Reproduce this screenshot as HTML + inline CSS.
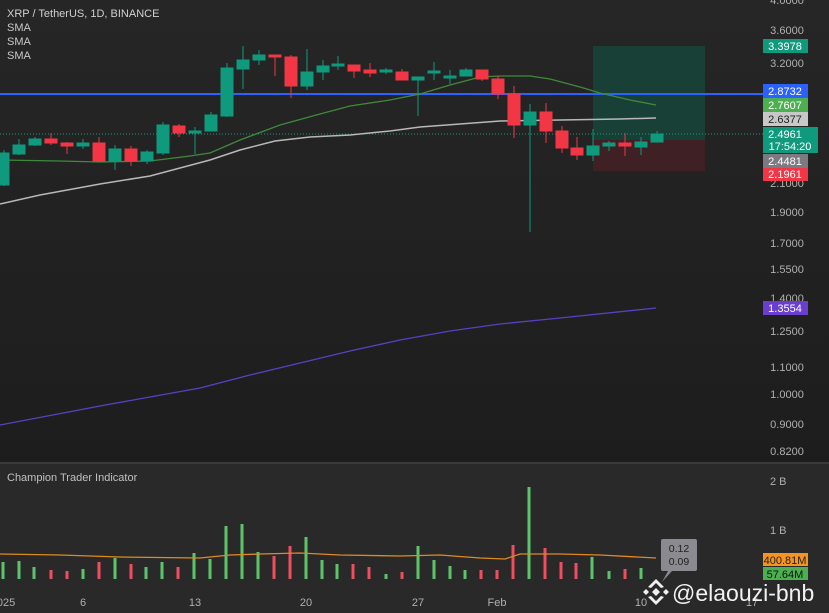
<!DOCTYPE html>
<html><head><meta charset="utf-8"><style>
html,body{margin:0;padding:0;background:#202020;width:829px;height:613px;overflow:hidden}
svg{display:block}
text{font-family:"Liberation Sans",sans-serif}
</style></head><body>
<svg width="829" height="613" xmlns="http://www.w3.org/2000/svg">
<defs><linearGradient id="bg" x1="0" y1="0" x2="0" y2="1"><stop offset="0" stop-color="#262626"/><stop offset="1" stop-color="#1d1d1d"/></linearGradient></defs>
<rect x="0" y="0" width="829" height="462" fill="url(#bg)"/>
<rect x="0" y="462" width="829" height="2" fill="#3a3a3a"/>
<rect x="0" y="464" width="829" height="149" fill="#292929"/>
<rect x="593" y="46" width="112" height="94" fill="#0d5c4a" fill-opacity="0.5"/>
<rect x="593" y="140" width="112" height="31" fill="#4a2227" fill-opacity="0.75"/>
<line x1="0" y1="134" x2="763" y2="134" stroke="#149a7c" stroke-width="1" stroke-dasharray="1,2"/>
<rect x="0" y="93" width="763" height="2" fill="#2962ff"/>
<polyline fill="none" stroke="#3f8a3a" stroke-width="1.3" points="0,160 60,161 100,162 150,161 190,156 210,153 240,140 280,125 320,114 350,106 390,100 420,94 450,85 480,77 500,76 530,76 550,79 580,87 600,93 630,100 656,105"/>
<polyline fill="none" stroke="#b8b8b8" stroke-width="1.5" points="0,204 40,195 100,184 150,176 210,160 240,150 275,141 310,137 350,135 390,131 420,127 460,124 500,121 560,120 620,119 656,118"/>
<polyline fill="none" stroke="#5b3fc4" stroke-width="1.3" points="0,425 100,406 200,388 250,375 300,363 350,351 400,340 450,331 500,324 560,318 656,308"/>
<g stroke-width="1">
<g fill="#0f9a7e" stroke="#0f9a7e">
<line x1="4" y1="150" x2="4" y2="186"/><rect x="0" y="153" width="9" height="32"/>
<line x1="19" y1="139" x2="19" y2="155"/><rect x="13" y="145" width="12" height="9"/>
<line x1="35" y1="137" x2="35" y2="146"/><rect x="29" y="139" width="12" height="6"/>
<line x1="83" y1="139" x2="83" y2="149"/><rect x="77" y="143" width="12" height="3"/>
<line x1="115" y1="145" x2="115" y2="170"/><rect x="109" y="149" width="12" height="12"/>
<line x1="147" y1="150" x2="147" y2="164"/><rect x="141" y="152" width="12" height="9"/>
<line x1="163" y1="122" x2="163" y2="155"/><rect x="157" y="125" width="12" height="28"/>
<line x1="195" y1="127" x2="195" y2="154"/><rect x="189" y="131" width="12" height="2"/>
<line x1="211" y1="112" x2="211" y2="131"/><rect x="205" y="115" width="12" height="16"/>
<line x1="227" y1="63" x2="227" y2="117"/><rect x="221" y="68" width="12" height="48"/>
<line x1="243" y1="46" x2="243" y2="89"/><rect x="237" y="60" width="12" height="9"/>
<line x1="259" y1="50" x2="259" y2="65"/><rect x="253" y="55" width="12" height="5"/>
<line x1="307" y1="49" x2="307" y2="90"/><rect x="301" y="72" width="12" height="14"/>
<line x1="323" y1="60" x2="323" y2="80"/><rect x="317" y="66" width="12" height="6"/>
<line x1="338" y1="56" x2="338" y2="70"/><rect x="332" y="64" width="12" height="2"/>
<line x1="386" y1="68" x2="386" y2="74"/><rect x="380" y="70" width="12" height="2"/>
<line x1="418" y1="77" x2="418" y2="116"/><rect x="412" y="77" width="12" height="3"/>
<line x1="434" y1="62" x2="434" y2="80"/><rect x="428" y="71" width="12" height="2"/>
<line x1="450" y1="70" x2="450" y2="84"/><rect x="444" y="76" width="12" height="2"/>
<line x1="466" y1="68" x2="466" y2="76"/><rect x="460" y="70" width="12" height="6"/>
<line x1="530" y1="104" x2="530" y2="232"/><rect x="524" y="112" width="12" height="13"/>
<line x1="593" y1="129" x2="593" y2="161"/><rect x="587" y="146" width="12" height="9"/>
<line x1="609" y1="141" x2="609" y2="151"/><rect x="603" y="143" width="12" height="3"/>
<line x1="641" y1="137" x2="641" y2="155"/><rect x="635" y="142" width="12" height="5"/>
<line x1="657" y1="131" x2="657" y2="135"/><rect x="651" y="134" width="12" height="8"/>
</g>
<g fill="#f23645" stroke="#f23645">
<line x1="51" y1="133" x2="51" y2="145"/><rect x="45" y="139" width="12" height="4"/>
<line x1="67" y1="142" x2="67" y2="154"/><rect x="61" y="143" width="12" height="3"/>
<line x1="99" y1="137" x2="99" y2="162"/><rect x="93" y="143" width="12" height="18"/>
<line x1="131" y1="146" x2="131" y2="166"/><rect x="125" y="149" width="12" height="12"/>
<line x1="179" y1="124" x2="179" y2="137"/><rect x="173" y="126" width="12" height="7"/>
<line x1="275" y1="55" x2="275" y2="76"/><rect x="269" y="55" width="12" height="2"/>
<line x1="291" y1="55" x2="291" y2="98"/><rect x="285" y="57" width="12" height="29"/>
<line x1="354" y1="65" x2="354" y2="78"/><rect x="348" y="65" width="12" height="6"/>
<line x1="370" y1="63" x2="370" y2="77"/><rect x="364" y="70" width="12" height="3"/>
<line x1="402" y1="69" x2="402" y2="80"/><rect x="396" y="72" width="12" height="8"/>
<line x1="482" y1="70" x2="482" y2="81"/><rect x="476" y="70" width="12" height="9"/>
<line x1="498" y1="76" x2="498" y2="99"/><rect x="492" y="79" width="12" height="15"/>
<line x1="514" y1="86" x2="514" y2="138"/><rect x="508" y="94" width="12" height="31"/>
<line x1="546" y1="103" x2="546" y2="143"/><rect x="540" y="112" width="12" height="19"/>
<line x1="562" y1="126" x2="562" y2="153"/><rect x="556" y="131" width="12" height="17"/>
<line x1="577" y1="137" x2="577" y2="160"/><rect x="571" y="148" width="12" height="7"/>
<line x1="625" y1="133" x2="625" y2="156"/><rect x="619" y="143" width="12" height="3"/>
</g>
</g>
<g font-size="11" fill="#c8c8c8">
<text x="7" y="17" fill="#d0d0d0">XRP / TetherUS, 1D, BINANCE</text>
<text x="7" y="31">SMA</text><text x="7" y="45">SMA</text><text x="7" y="59">SMA</text>
</g>
<g font-size="11" fill="#b0b0b0" text-anchor="middle">
<text x="787" y="4">4.0000</text>
<text x="787" y="34">3.6000</text>
<text x="787" y="67">3.2000</text>
<text x="787" y="187">2.1000</text>
<text x="787" y="216">1.9000</text>
<text x="787" y="247">1.7000</text>
<text x="787" y="273">1.5500</text>
<text x="787" y="302">1.4000</text>
<text x="787" y="335">1.2500</text>
<text x="787" y="371">1.1000</text>
<text x="787" y="398">1.0000</text>
<text x="787" y="428">0.9000</text>
<text x="787" y="455">0.8200</text>
</g>
<g font-size="11" text-anchor="middle">
<rect x="763" y="39" width="45" height="14" fill="#0f9a7e"/><text x="785" y="50" fill="#fff">3.3978</text>
<rect x="763" y="84" width="45" height="14" fill="#2962ff"/><text x="785" y="95" fill="#fff">2.8732</text>
<rect x="763" y="98" width="45" height="14" fill="#4caf50"/><text x="785" y="109" fill="#fff">2.7607</text>
<rect x="763" y="112" width="45" height="14" fill="#c8c8c8"/><text x="785" y="123" fill="#222">2.6377</text>
<rect x="763" y="127" width="55" height="26" fill="#0f9a7e"/><text x="785" y="138" fill="#fff">2.4961</text><text x="790" y="150" fill="#fff">17:54:20</text>
<rect x="763" y="154" width="45" height="14" fill="#7a7a80"/><text x="785" y="165" fill="#fff">2.4481</text>
<rect x="763" y="168" width="45" height="13" fill="#f23645"/><text x="785" y="178" fill="#fff">2.1961</text>
<rect x="763" y="301" width="45" height="14" fill="#6a3fd0"/><text x="785" y="312" fill="#fff">1.3554</text>
</g>
<text x="7" y="481" font-size="11" fill="#c0c0c0">Champion Trader Indicator</text>
<g stroke-width="3">
<g stroke="#5dc46a">
<line x1="3" y1="562" x2="3" y2="579"/><line x1="19" y1="561" x2="19" y2="579"/><line x1="34" y1="567" x2="34" y2="579"/>
<line x1="83" y1="569" x2="83" y2="579"/><line x1="115" y1="558" x2="115" y2="579"/><line x1="146" y1="567" x2="146" y2="579"/>
<line x1="162" y1="562" x2="162" y2="579"/><line x1="194" y1="553" x2="194" y2="579"/><line x1="210" y1="559" x2="210" y2="579"/>
<line x1="226" y1="526" x2="226" y2="579"/><line x1="242" y1="524" x2="242" y2="579"/><line x1="258" y1="552" x2="258" y2="579"/>
<line x1="306" y1="537" x2="306" y2="579"/><line x1="322" y1="560" x2="322" y2="579"/><line x1="337" y1="564" x2="337" y2="579"/>
<line x1="386" y1="574" x2="386" y2="579"/><line x1="418" y1="546" x2="418" y2="579"/><line x1="434" y1="560" x2="434" y2="579"/>
<line x1="450" y1="566" x2="450" y2="579"/><line x1="465" y1="570" x2="465" y2="579"/><line x1="529" y1="487" x2="529" y2="579"/>
<line x1="592" y1="557" x2="592" y2="579"/><line x1="609" y1="571" x2="609" y2="579"/><line x1="641" y1="568" x2="641" y2="579"/>
</g>
<g stroke="#f04d60">
<line x1="51" y1="570" x2="51" y2="579"/><line x1="67" y1="571" x2="67" y2="579"/><line x1="99" y1="562" x2="99" y2="579"/>
<line x1="131" y1="564" x2="131" y2="579"/><line x1="178" y1="567" x2="178" y2="579"/><line x1="274" y1="556" x2="274" y2="579"/>
<line x1="290" y1="546" x2="290" y2="579"/><line x1="353" y1="564" x2="353" y2="579"/><line x1="369" y1="567" x2="369" y2="579"/>
<line x1="402" y1="572" x2="402" y2="579"/><line x1="481" y1="570" x2="481" y2="579"/><line x1="497" y1="570" x2="497" y2="579"/>
<line x1="513" y1="545" x2="513" y2="579"/><line x1="545" y1="548" x2="545" y2="579"/><line x1="561" y1="562" x2="561" y2="579"/>
<line x1="576" y1="563" x2="576" y2="579"/><line x1="625" y1="569" x2="625" y2="579"/>
</g>
</g>
<polyline fill="none" stroke="#e08a1e" stroke-width="1.3" points="0,554 60,555 120,557 200,558 230,555 260,554 300,553 340,555 400,556 440,555 480,558 505,559 520,554 535,554 560,554 600,555 656,558"/>
<g font-size="11" fill="#b0b0b0"><text x="770" y="485">2 B</text><text x="770" y="534">1 B</text></g>
<rect x="763" y="553" width="45" height="13" fill="#f7941d"/><text x="785" y="564" font-size="11" text-anchor="middle" fill="#222">400.81M</text>
<rect x="763" y="567" width="45" height="13" fill="#4caf50"/><text x="785" y="578" font-size="11" text-anchor="middle" fill="#111">57.64M</text>
<rect x="661" y="539" width="36" height="32" rx="2" fill="#8a8a90"/>
<path d="M672 571 L662 582 L668 571 Z" fill="#8a8a90"/>
<text x="679" y="552" font-size="10.5" text-anchor="middle" fill="#222">0.12</text>
<text x="679" y="565" font-size="10.5" text-anchor="middle" fill="#222">0.09</text>
<g font-size="11" fill="#b0b0b0" text-anchor="middle">
<text x="6" y="606">025</text><text x="83" y="606">6</text><text x="195" y="606">13</text><text x="306" y="606">20</text>
<text x="418" y="606">27</text><text x="497" y="606">Feb</text><text x="641" y="606">10</text><text x="752" y="606">17</text>
</g>
<g fill="#f0f0f0">
<polygon points="656,588 660,592 656,596 652,592"/>
<polygon points="646,589 649,592 646,595 643,592"/>
<polygon points="666,589 669,592 666,595 663,592"/>
<path d="M656,579 L664,587 L661,588 L656,583 L651,588 L648,587 Z"/>
<path d="M656,605 L664,597 L661,596 L656,601 L651,596 L648,597 Z"/>
</g>
<text x="672" y="601" font-size="23" fill="#f2f2f2">@elaouzi-bnb</text>
</svg>
</body></html>
